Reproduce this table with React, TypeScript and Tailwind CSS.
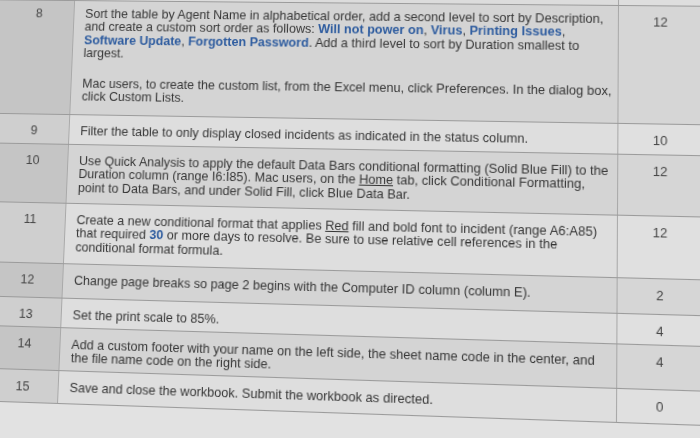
import type { ReactNode } from "react";

// photo of a printed table, slightly tilted: a fixed perspective matrix maps the flat table onto it
const TILT =
  "origin-top-left [transform:matrix3d(0.958529,0.0086726,0,-0.000059467,-0.046192,0.970734,0,-0.000067061,0,0,1,0,2.89942,-0.57663,0,1)]";

function B({ children }: { children: ReactNode }) {
  return <span className="font-bold text-[#2e5c9f]">{children}</span>;
}

interface RowProps {
  num?: string;
  pts?: string;
  height: string;
  pad?: string;
  dark?: boolean;
  first?: boolean;
  children?: ReactNode;
}

function Row({ num, pts, height, pad = "pt-[10px]", dark, first, children }: RowProps) {
  return (
    <div className={`flex ${height} border-b border-[#9b9b9b] ${first ? "border-t" : ""}`}>
      <div
        className={`w-[95px] shrink-0 border-r border-[#a9a9a9] pl-[23px] ${pad} text-center text-[#464646] ${
          dark ? "bg-[#c5c5c5]" : "bg-[#cfcfcf]"
        }`}
      >
        {num}
      </div>
      <div
        className={`w-[544px] shrink-0 border-r border-[#a9a9a9] pl-[11px] ${pad} whitespace-nowrap ${
          dark ? "bg-[#d4d4d4]" : "bg-[#dedede]"
        }`}
      >
        {children}
      </div>
      <div
        className={`w-[121px] shrink-0 pr-[41px] pt-[10px] text-center text-[#464646] ${
          dark ? "bg-[#d6d6d6]" : "bg-[#e0e0e0]"
        }`}
      >
        {pts}
      </div>
    </div>
  );
}

export default function App() {
  return (
    <div className="relative h-[438px] w-[700px] overflow-hidden bg-[#e2e2e2] font-['Liberation_Sans',Arial,sans-serif] text-[12.6px] leading-[13.4px] text-[#363636]">
      <div className={`flex ${TILT}`}>
        <div className="ml-[-20px] mt-[-20px] w-[760px]">
          {/* bottom of the row above, cut off by the photo */}
          <div className="flex h-[20px]">
            <div className="w-[95px] shrink-0 border-r border-[#a9a9a9] bg-[#cbcbcb]" />
            <div className="w-[544px] shrink-0 border-r border-[#a9a9a9] bg-[#dcdcdc]" />
            <div className="w-[121px] shrink-0 bg-[#dedede]" />
          </div>

          <Row num="8" pts="12" height="h-[117px]" pad="pt-[7px]" dark first>
            <div>Sort the table by Agent Name in alphabetical order, add a second level to sort by Description,</div>
            <div>
              and create a custom sort order as follows: <B>Will not power on</B>, <B>Virus</B>,{" "}
              <B>Printing Issues</B>,
            </div>
            <div>
              <B>Software Update</B>, <B>Forgotten Password</B>. Add a third level to sort by Duration smallest to
            </div>
            <div>largest.</div>
            <div className="h-[17px]" />
            <div>Mac users, to create the custom list, from the Excel menu, click Preferences. In the dialog box,</div>
            <div>click Custom Lists.</div>
          </Row>

          <Row num="9" pts="10" height="h-[30px]">
            <div>Filter the table to only display closed incidents as indicated in the status column.</div>
          </Row>

          <Row num="10" pts="12" height="h-[59px]" dark>
            <div>Use Quick Analysis to apply the default Data Bars conditional formatting (Solid Blue Fill) to the</div>
            <div>
              Duration column (range I6:I85). Mac users, on the <span className="underline">Home</span> tab, click
              Conditional Formatting,
            </div>
            <div>point to Data Bars, and under Solid Fill, click Blue Data Bar.</div>
          </Row>

          <Row num="11" pts="12" height="h-[60px]">
            <div>
              Create a new conditional format that applies <span className="underline">Red</span> fill and bold font
              to incident (range A6:A85)
            </div>
            <div>
              that required <B>30</B> or more days to resolve. Be sure to use relative cell references in the
            </div>
            <div>conditional format formula.</div>
          </Row>

          <Row num="12" pts="2" height="h-[34px]" dark>
            <div>Change page breaks so page 2 begins with the Computer ID column (column E).</div>
          </Row>

          <Row num="13" pts="4" height="h-[29px]">
            <div>Set the print scale to 85%.</div>
          </Row>

          <Row num="14" pts="4" height="h-[42px]" dark>
            <div>Add a custom footer with your name on the left side, the sheet name code in the center, and</div>
            <div>the file name code on the right side.</div>
          </Row>

          <Row num="15" pts="0" height="h-[32px]">
            <div>Save and close the workbook. Submit the workbook as directed.</div>
          </Row>

          <div className="h-[80px] bg-[#e2e2e2]" />
        </div>
      </div>
    </div>
  );
}
